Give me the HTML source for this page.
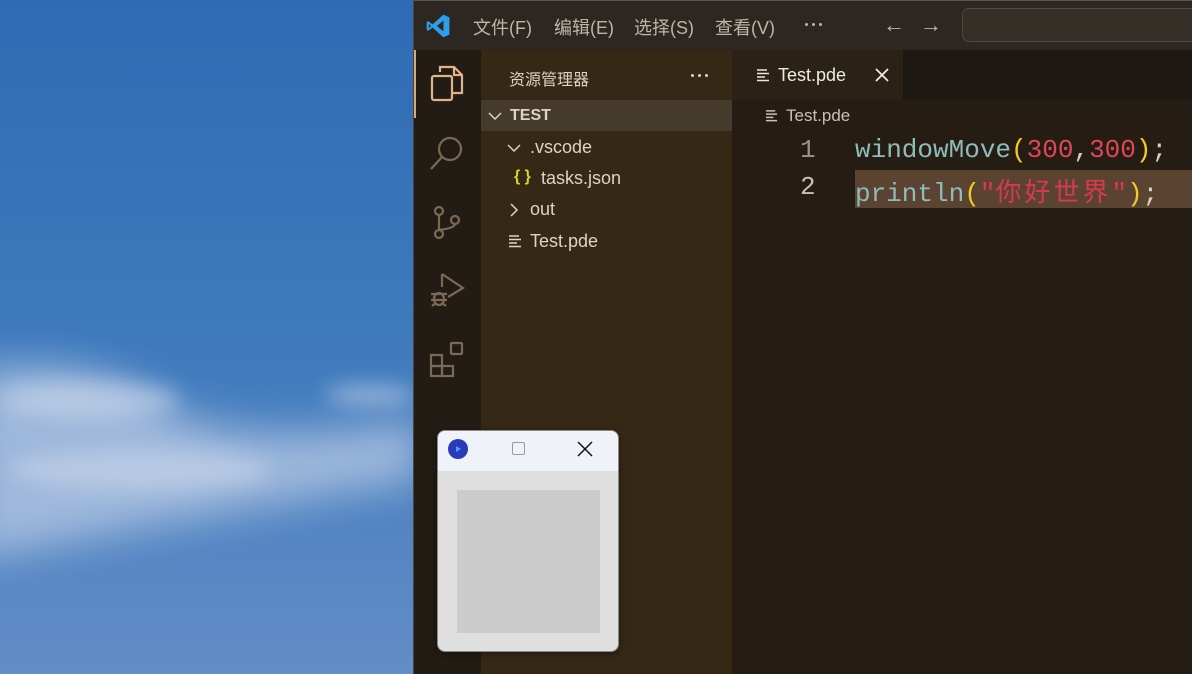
<!DOCTYPE html>
<html><head><meta charset="utf-8"><style>
*{margin:0;padding:0;box-sizing:border-box}
body{width:1192px;height:674px;overflow:hidden;position:relative;font-family:"Liberation Sans","Noto Sans CJK SC",sans-serif;background:#3f78bb}
.abs{position:absolute}
.t{color:#cfc7bb;font-size:18px;white-space:nowrap}
.mono{font-family:"Liberation Mono","Noto Sans CJK SC",monospace;font-size:26px;white-space:pre}
.dots{position:absolute;display:flex;gap:4px}
.dots i{width:3px;height:3px;border-radius:50%;background:#ddd4c6;display:block}
</style></head><body>
<svg class="abs" style="left:0;top:0" width="420" height="674">
<defs>
<linearGradient id="sky" x1="0" y1="0" x2="0" y2="1"><stop offset="0" stop-color="#2f6bb3"/><stop offset="0.5" stop-color="#3f7abd"/><stop offset="1" stop-color="#628dc7"/></linearGradient>
<filter id="b" x="-50%" y="-50%" width="200%" height="200%"><feGaussianBlur stdDeviation="20"/></filter>
<filter id="b2" x="-50%" y="-50%" width="200%" height="200%"><feGaussianBlur stdDeviation="10"/></filter>
</defs>
<rect width="420" height="674" fill="url(#sky)"/>
<g filter="url(#b)" fill="#b3c6e2" opacity="0.8">
<path d="M-30 370 Q90 350 170 410 Q250 450 420 420 L420 480 Q300 500 160 525 Q60 545 -30 560 Z"/>
</g>
<g filter="url(#b2)" fill="#c8d5ea" opacity="0.6">
<ellipse cx="90" cy="400" rx="90" ry="18"/>
<ellipse cx="370" cy="395" rx="45" ry="10"/>
<ellipse cx="140" cy="470" rx="130" ry="20"/>
</g>
</svg>
<!-- VS Code window -->
<div class="abs" style="left:413px;top:0;width:779px;height:674px;background:#241e16;border-left:1px solid #4a443b"></div>
<div class="abs" style="left:414px;top:0;width:778px;height:50px;background:#2c2720;border-top:1px solid #5a554d"></div>
<svg class="abs" style="left:425px;top:13px" width="26" height="26" viewBox="0 0 24 24"><path d="M17 1.5 L22.5 4 V20 L17 22.5 L7 13.5 L3 16.5 L1.5 15.5 V8.5 L3 7.5 L7 10.5 Z M17 7 L11 12 L17 17 Z M3.5 10 V14 L5.5 12 Z" fill="#2f9ee8"/></svg>
<div class="abs t" style="left:473px;top:14px;color:#bdb5a8">文件(F)</div>
<div class="abs t" style="left:554px;top:14px;color:#bdb5a8">编辑(E)</div>
<div class="abs t" style="left:634px;top:14px;color:#bdb5a8">选择(S)</div>
<div class="abs t" style="left:715px;top:14px;color:#bdb5a8">查看(V)</div>
<div class="dots" style="left:805px;top:23px"><i style="background:#bdb5a8"></i><i style="background:#bdb5a8"></i><i style="background:#bdb5a8"></i></div>
<div class="abs t" style="left:883px;top:12px;color:#bdb5a8;font-size:22px">←</div>
<div class="abs t" style="left:920px;top:12px;color:#bdb5a8;font-size:22px">→</div>
<div class="abs" style="left:962px;top:8px;width:240px;height:34px;border:1px solid #4f493f;border-radius:7px;background:#342e26"></div>
<!-- activity bar -->
<div class="abs" style="left:414px;top:50px;width:67px;height:624px;background:#221c14"></div>
<div class="abs" style="left:414px;top:50px;width:2px;height:68px;background:#d9a77a"></div>
<svg class="abs" style="left:428px;top:64px" width="38" height="40" viewBox="0 0 38 40" fill="none" stroke="#e0b38a" stroke-width="2.2"><path d="M12 8 V3 H26 L34 11 V29 H24"/><path d="M26 3 V11 H34"/><rect x="4" y="12" width="20" height="24" rx="2"/></svg>
<svg class="abs" style="left:428px;top:133px" width="38" height="40" viewBox="0 0 38 40" fill="none" stroke="#7a6a55" stroke-width="2.2"><circle cx="22" cy="16" r="11"/><path d="M14 24 L3 36"/></svg>
<svg class="abs" style="left:428px;top:202px" width="38" height="40" viewBox="0 0 38 40" fill="none" stroke="#7a6a55" stroke-width="2.2"><circle cx="11" cy="9" r="4"/><circle cx="11" cy="32" r="4"/><circle cx="27" cy="18" r="4"/><path d="M11 13 V28 M27 22 Q27 26 11 28"/></svg>
<svg class="abs" style="left:428px;top:271px" width="38" height="40" viewBox="0 0 38 40" fill="none" stroke="#7a6a55" stroke-width="2.2"><path d="M14 3 L35 17 L20 26"/><path d="M14 3 V16"/><ellipse cx="11" cy="28" rx="5" ry="6"/><path d="M3 23 H19 M3 29 H19 M4 35 L8 32 M18 35 L14 32"/></svg>
<svg class="abs" style="left:428px;top:340px" width="38" height="40" viewBox="0 0 38 40" fill="none" stroke="#7a6a55" stroke-width="2.2"><rect x="3" y="15" width="11" height="11"/><rect x="3" y="26" width="11" height="10"/><rect x="14" y="26" width="11" height="10"/><rect x="23" y="3" width="11" height="11" rx="1"/></svg>
<!-- sidebar -->
<div class="abs" style="left:481px;top:50px;width:251px;height:624px;background:#352916"></div>
<div class="abs t" style="left:509px;top:66px;font-size:16px;color:#ddd4c6">资源管理器</div>
<div class="dots" style="left:691px;top:74px"><i></i><i></i><i></i></div>
<div class="abs" style="left:481px;top:100px;width:251px;height:31px;background:#453b2c"></div>
<svg class="abs" style="left:488px;top:109px" width="14" height="14" viewBox="0 0 14 14" fill="none" stroke="#ddd4c6" stroke-width="1.5"><path d="M1 4 L7 10 L13 4"/></svg>
<div class="abs t" style="left:510px;top:107px;font-size:16px;font-weight:bold;color:#ddd4c6">TEST</div>
<svg class="abs" style="left:507px;top:141px" width="14" height="14" viewBox="0 0 14 14" fill="none" stroke="#ddd4c6" stroke-width="1.5"><path d="M1 4 L7 10 L13 4"/></svg>
<div class="abs t" style="left:530px;top:137px;color:#ddd4c6">.vscode</div>
<div class="abs t" style="left:514px;top:168px;font-size:16px;color:#d8d337;font-weight:bold">{ }</div>
<div class="abs t" style="left:541px;top:168px;color:#ddd4c6">tasks.json</div>
<svg class="abs" style="left:507px;top:203px" width="14" height="14" viewBox="0 0 14 14" fill="none" stroke="#ddd4c6" stroke-width="1.5"><path d="M4 1 L10 7 L4 13"/></svg>
<div class="abs t" style="left:530px;top:199px;color:#ddd4c6">out</div>
<svg class="abs" style="left:508px;top:234px" width="14" height="14" viewBox="0 0 14 14" stroke="#ddd4c6" stroke-width="1.6"><path d="M1 2 H11 M1 5.5 H13 M1 9 H9 M1 12.5 H13"/></svg>
<div class="abs t" style="left:530px;top:231px;color:#ddd4c6">Test.pde</div>
<!-- editor -->
<div class="abs" style="left:732px;top:50px;width:460px;height:50px;background:#1d1912"></div>
<div class="abs" style="left:732px;top:50px;width:171px;height:50px;background:#2a2217"></div>
<svg class="abs" style="left:756px;top:68px" width="14" height="14" viewBox="0 0 14 14" stroke="#ede6da" stroke-width="1.6"><path d="M1 2 H11 M1 5.5 H13 M1 9 H9 M1 12.5 H13"/></svg>
<div class="abs t" style="left:778px;top:65px;color:#f0ebe2">Test.pde</div>
<svg class="abs" style="left:875px;top:68px" width="14" height="14" viewBox="0 0 14 14" stroke="#f0ebe2" stroke-width="1.8"><path d="M1 1 L13 13 M13 1 L1 13"/></svg>
<div class="abs" style="left:732px;top:100px;width:460px;height:574px;background:#251d14"></div>
<svg class="abs" style="left:765px;top:109px" width="13" height="13" viewBox="0 0 14 14" stroke="#c8c0b3" stroke-width="1.6"><path d="M1 2 H11 M1 5.5 H13 M1 9 H9 M1 12.5 H13"/></svg>
<div class="abs t" style="left:786px;top:106px;font-size:17px;color:#c8c0b3">Test.pde</div>
<div class="abs" style="left:855px;top:170px;width:337px;height:38px;background:#5a4330"></div>
<div class="abs mono" style="left:800px;top:135px;color:#9c9488">1</div>
<div class="abs mono" style="left:800px;top:172px;color:#c8c0b3">2</div>
<div class="abs mono" style="left:855px;top:135px;color:#8fbcbb">windowMove<span style="color:#f2cc22">(</span><span style="color:#e0455a">300</span><span style="color:#d8d0c4">,</span><span style="color:#e0455a">300</span><span style="color:#f2cc22">)</span><span style="color:#d8d0c4">;</span></div>
<div class="abs mono" style="left:855px;top:172px;color:#8fbcbb">println<span style="color:#f2cc22">(</span><span style="color:#d9394f">"<span style="letter-spacing:3px">你好世界</span>"</span><span style="color:#f2cc22">)</span><span style="color:#d8d0c4">;</span></div>
<!-- popup window -->
<div class="abs" style="left:437px;top:430px;width:182px;height:222px;border-radius:8px;background:#dfdfdf;border:1px solid #8a8a8a;overflow:hidden;box-shadow:0 2px 8px rgba(0,0,0,.4)">
<div style="height:40px;background:#eff2f8"></div>
<div class="abs" style="left:19px;top:59px;width:143px;height:143px;background:#cccccc"></div>
</div>
<div class="abs" style="left:448px;top:439px;width:20px;height:20px;border-radius:50%;background:#2a3bb8"></div>
<div class="abs" style="left:456px;top:446px;width:0;height:0;border-left:5px solid #4aa0ff;border-top:3px solid transparent;border-bottom:3px solid transparent"></div>
<div class="abs" style="left:512px;top:442px;width:13px;height:13px;border:1px solid #9a9a9a;border-radius:2px"></div>
<svg class="abs" style="left:577px;top:441px" width="16" height="16" viewBox="0 0 16 16" stroke="#111" stroke-width="1.5"><path d="M1 1 L15 15 M15 1 L1 15"/></svg>
</body></html>
